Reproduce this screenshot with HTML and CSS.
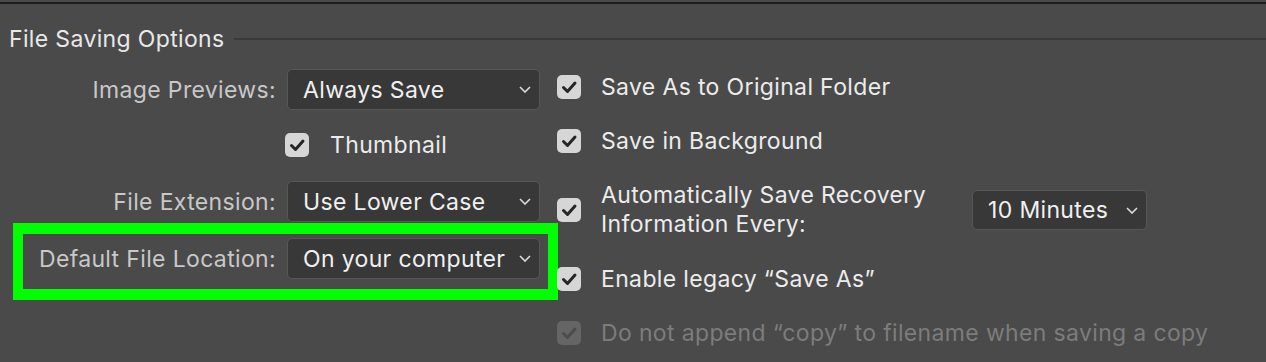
FILE: index.html
```html
<!DOCTYPE html>
<html>
<head>
<meta charset="utf-8">
<link rel="stylesheet" href="styles.css">
</head>
<body>
<div class="window">
  <div class="section-head">
    <span class="section-title">File Saving Options</span>
    <span class="section-rule"></span>
  </div>
  <div class="cols">
    <div class="left">
      <div class="row r1">
        <span class="label">Image Previews:</span>
        <div class="select"><span>Always Save</span><svg class="chev" viewBox="0 0 12 7"><path d="M1 1 L6 6 L11 1"/></svg></div>
      </div>
      <div class="row r2">
        <span class="label"></span>
        <div class="check-row thumb">
          <span class="cb"><svg viewBox="0 0 24 24"><path d="M6.5 12.5 L10.5 16.5 L18 8"/></svg></span>
          <span class="cb-text">Thumbnail</span>
        </div>
      </div>
      <div class="row r3">
        <span class="label">File Extension:</span>
        <div class="select"><span>Use Lower Case</span><svg class="chev" viewBox="0 0 12 7"><path d="M1 1 L6 6 L11 1"/></svg></div>
      </div>
      <div class="row highlight">
        <span class="label">Default File Location:</span>
        <div class="select"><span>On your computer</span><svg class="chev" viewBox="0 0 12 7"><path d="M1 1 L6 6 L11 1"/></svg></div>
      </div>
    </div>
    <div class="right">
      <div class="check-row rr1">
        <span class="cb"><svg viewBox="0 0 24 24"><path d="M6.5 12.5 L10.5 16.5 L18 8"/></svg></span>
        <span class="cb-text">Save As to Original Folder</span>
      </div>
      <div class="check-row rr2">
        <span class="cb"><svg viewBox="0 0 24 24"><path d="M6.5 12.5 L10.5 16.5 L18 8"/></svg></span>
        <span class="cb-text">Save in Background</span>
      </div>
      <div class="check-row rr3">
        <span class="cb"><svg viewBox="0 0 24 24"><path d="M6.5 12.5 L10.5 16.5 L18 8"/></svg></span>
        <span class="cb-text two">Automatically Save Recovery<br>Information Every:</span>
        <div class="select small"><span>10 Minutes</span><svg class="chev" viewBox="0 0 12 7"><path d="M1 1 L6 6 L11 1"/></svg></div>
      </div>
      <div class="check-row rr4">
        <span class="cb"><svg viewBox="0 0 24 24"><path d="M6.5 12.5 L10.5 16.5 L18 8"/></svg></span>
        <span class="cb-text">Enable legacy “Save As”</span>
      </div>
      <div class="check-row rr5 disabled">
        <span class="cb"><svg viewBox="0 0 24 24"><path d="M6.5 12.5 L10.5 16.5 L18 8"/></svg></span>
        <span class="cb-text">Do not append “copy” to filename when saving a copy</span>
      </div>
    </div>
  </div>
</div>
</body>
</html>
```
FILE: styles.css
```css
html, body {
  margin: 0;
  padding: 0;
  background: #4a4a4a;
}
body {
  width: 1266px;
  height: 362px;
  overflow: hidden;
  font-family: Inter, "Liberation Sans", sans-serif;
  letter-spacing: 0.35px;
  -webkit-font-smoothing: antialiased;
}
.window {
  margin-top: 2px;
  border-top: 2px solid #1c1c1c;
  height: 358px;
}
.section-head {
  display: flex;
  align-items: center;
  height: 40px;
  margin-top: 15px;
  padding-left: 9px;
}
.section-title {
  color: #e8e8e8;
  font-size: 23px;
  line-height: 40px;
}
.section-rule {
  flex: 1;
  height: 2px;
  margin-left: 9px;
  background: #393939;
}
.cols {
  display: flex;
  margin-top: 8px;
}
.left {
  width: 557px;
  display: flex;
  flex-direction: column;
}
.row {
  display: flex;
  align-items: center;
}
.label {
  width: 276px;
  text-align: right;
  color: #c8c8c8;
  font-size: 23px;
  flex-shrink: 0;
  white-space: nowrap;
}
.select {
  box-sizing: border-box;
  width: 253px;
  height: 41px;
  margin-left: 11px;
  background: #383838;
  border: 1.5px solid #575757;
  border-radius: 5px;
  display: flex;
  align-items: center;
  justify-content: space-between;
  padding: 0 8px 0 15px;
  color: #f0f0f0;
  font-size: 23px;
  white-space: nowrap;
}
.chev {
  width: 12px;
  height: 7px;
  flex-shrink: 0;
  fill: none;
  stroke: #dcdcdc;
  stroke-width: 1.6;
}
.r1 { margin-top: 2px; }
.r2 { margin-top: 23px; height: 24px; }
.r3 { margin-top: 24px; }
.thumb { margin-left: 9px; }
.thumb .cb-text { margin-left: 21px; }
.highlight {
  margin-top: 1px;
  margin-left: 13px;
  width: 545px;
  box-sizing: border-box;
  border: 10px solid #00ff00;
  border-top-width: 11px;
  border-bottom-width: 11px;
  padding: 4px 0 10px 0;
}
.highlight .label { width: 253px; }
.check-row {
  display: flex;
  align-items: center;
}
.cb {
  width: 24px;
  height: 24px;
  border-radius: 5px;
  background: #d6d6d6;
  flex-shrink: 0;
  display: flex;
}
.cb svg {
  width: 24px;
  height: 24px;
  fill: none;
  stroke: #262626;
  stroke-width: 3;
  stroke-linecap: round;
  stroke-linejoin: round;
}
.cb-text {
  color: #ececec;
  font-size: 23px;
  white-space: nowrap;
}
.right {
  display: flex;
  flex-direction: column;
}
.right .cb-text { margin-left: 20px; }
.rr1 { height: 40px; }
.rr2 { height: 40px; margin-top: 14px; }
.rr3 { height: 56px; margin-top: 21px; }
.rr4 { height: 40px; margin-top: 21px; }
.rr5 { height: 40px; margin-top: 14px; }
.two { line-height: 29px; width: 371px; }
.select.small {
  width: 175px;
  height: 40px;
  margin-left: 0;
}
.disabled .cb { background: #656565; }
.disabled .cb svg { stroke: #4c4c4c; }
.disabled .cb-text { color: #7c7c7c; }
```
